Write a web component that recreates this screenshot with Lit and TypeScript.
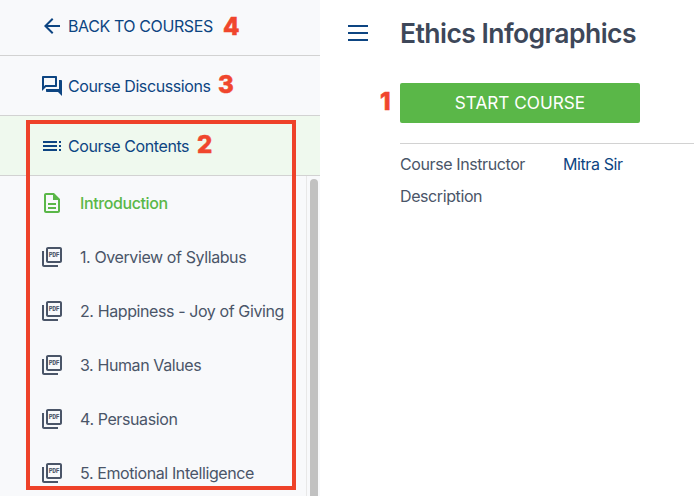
import { LitElement, html, css, svg } from 'lit';
import { customElement } from 'lit/decorators.js';

const icon = (body: unknown) => html`<svg class="icon" viewBox="0 0 24 24" width="24" height="24" fill="currentColor">${body}</svg>`;

const arrowIcon = icon(svg`<path d="M20 11H7.83l5.59-5.59L12 4l-8 8 8 8 1.41-1.41L7.83 13H20v-2z"/>`);
const forumIcon = icon(svg`<path d="M15 4v7H5.17L4 12.17V4h11m1-2H3c-.55 0-1 .45-1 1v14l4-4h10c.55 0 1-.45 1-1V3c0-.55-.45-1-1-1zm5 4h-2v9H6v2c0 .55.45 1 1 1h11l4 4V7c0-.55-.45-1-1-1z"/>`);
const tocIcon = icon(svg`<path d="M3 9h14V7H3v2zm0 4h14v-2H3v2zm0 4h14v-2H3v2zM19 9h2V7h-2zM19 13h2v-2h-2zM19 17h2v-2h-2z"/>`);
const fileIcon = icon(svg`<path d="M8 16h8v2H8zm0-4h8v2H8zm6-10H6c-1.1 0-2 .9-2 2v16c0 1.1.89 2 1.99 2H18c1.1 0 2-.9 2-2V8l-6-6zm4 18H6V4h7v5h5v11z"/>`);
const pdfIcon = icon(svg`
  <path d="M20 2H8c-1.1 0-2 .9-2 2v12c0 1.1.9 2 2 2h12c1.1 0 2-.9 2-2V4c0-1.1-.9-2-2-2zm0 14H8V4h12v12zM4 6H2v14c0 1.1.9 2 2 2h14v-2H4V6z"/>
  <text x="14" y="12.4" text-anchor="middle" font-family="Liberation Mono, monospace" font-weight="700" font-size="6.4">PDF</text>
`);

const LESSONS = [
  '1. Overview of Syllabus',
  '2. Happiness - Joy of Giving',
  '3. Human Values',
  '4. Persuasion',
  '5. Emotional Intelligence',
];

@customElement('app-root')
export class AppRoot extends LitElement {
  static styles = css`
    :host {
      display: flex;
      position: relative;
      width: 694px;
      height: 496px;
      overflow: hidden;
      background: #fff;
      font-family: Inter, 'Liberation Sans', sans-serif;
      font-size: 16px;
      letter-spacing: -0.4px;
      color: #4a5568;
    }
    .icon { flex-shrink: 0; }

    .sidebar {
      display: flex;
      flex-direction: column;
      width: 320px;
      flex-shrink: 0;
      background: #f8f9fb;
    }
    .nav {
      display: flex;
      align-items: center;
      gap: 4px;
      padding-left: 40px;
      height: 60px;
      box-sizing: border-box;
      border-bottom: 1px solid #d2d2d2;
      color: #0d4582;
    }
    .nav.back { height: 56px; padding-bottom: 4px; }
    .nav.active { background: #eff9ee; }

    .contents { display: flex; flex: 1; min-height: 0; }
    .lessons { flex: 1; padding-left: 40px; overflow: hidden; }
    .lesson {
      display: flex;
      align-items: center;
      gap: 16px;
      height: 54px;
      white-space: nowrap;
    }
    .lesson.current { color: #5ab748; font-weight: 500; }
    .track {
      width: 14px;
      box-sizing: border-box;
      padding: 3px 3px 0 3px;
      border-left: 1px solid #e8e8e8;
    }
    .thumb {
      height: 100%;
      width: 8px;
      background: #c1c1c1;
      border-radius: 4px 4px 0 0;
    }

    .main { flex: 1; min-width: 0; padding-left: 28px; }
    .header {
      display: flex;
      align-items: center;
      gap: 32px;
      height: 66px;
    }
    .menu { color: #0d4582; }
    h1 {
      margin: 0;
      font-size: 26.5px;
      font-weight: 600;
      letter-spacing: -0.55px;
      color: #3d4759;
      white-space: nowrap;
    }
    .body { margin-left: 52px; padding-top: 17px; }
    .start {
      display: block;
      width: 240px;
      height: 40px;
      padding: 0 0 2px;
      border: 0;
      border-radius: 2px;
      background: #5ab748;
      color: #fff;
      font: 400 17.2px Inter, 'Liberation Sans', sans-serif;
    }
    .rule { height: 1px; margin-top: 20px; background: #d2d2d2; }
    .meta {
      display: grid;
      grid-template-columns: 163px 1fr;
      grid-auto-rows: 32px;
      align-items: center;
      padding-top: 4px;
    }
    .meta .link { color: #0d4582; }

    .note {
      position: absolute;
      color: #f0462d;
      font: 800 24px/24px Inter, 'Liberation Sans', sans-serif;
      letter-spacing: 0;
      -webkit-text-stroke: 0.5px #f0462d;
    }
    .frame {
      position: absolute;
      left: 26px;
      top: 120px;
      width: 270px;
      height: 370px;
      box-sizing: border-box;
      border: 4px solid #ee4229;
    }
  `;

  render() {
    return html`
      <aside class="sidebar">
        <div class="nav back">${arrowIcon}<span>BACK TO COURSES</span></div>
        <div class="nav">${forumIcon}<span>Course Discussions</span></div>
        <div class="nav active">${tocIcon}<span>Course Contents</span></div>
        <div class="contents">
          <div class="lessons">
            <div class="lesson current">${fileIcon}<span>Introduction</span></div>
            ${LESSONS.map((name) => html`<div class="lesson">${pdfIcon}<span>${name}</span></div>`)}
          </div>
          <div class="track"><div class="thumb"></div></div>
        </div>
      </aside>

      <main class="main">
        <div class="header">
          <svg class="menu" width="20" height="16" viewBox="0 0 20 16" fill="currentColor">
            <rect y="0" width="20" height="2"/><rect y="7" width="20" height="2"/><rect y="14" width="20" height="2"/>
          </svg>
          <h1>Ethics Infographics</h1>
        </div>
        <div class="body">
          <button class="start">START COURSE</button>
          <div class="rule"></div>
          <div class="meta">
            <span>Course Instructor</span><span class="link">Mitra Sir</span>
            <span>Description</span>
          </div>
        </div>
      </main>

      <div class="frame"></div>
      <span class="note" style="left:223px;top:15px">4</span>
      <span class="note" style="left:218px;top:73px">3</span>
      <span class="note" style="left:197px;top:133px">2</span>
      <span class="note" style="left:380px;top:90px">1</span>
    `;
  }
}
